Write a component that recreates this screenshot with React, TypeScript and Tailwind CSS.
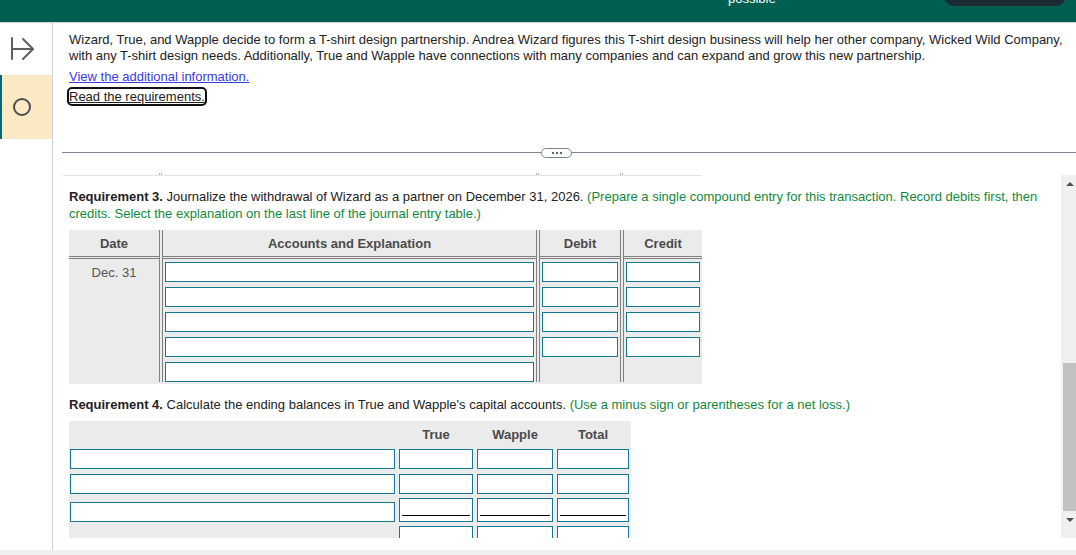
import React from "react";

const Box = ({ className = "" }: { className?: string }) => (
  <div className={`h-[20px] border border-[#137a91] bg-white ${className}`} />
);

const TotalBox = ({ className = "" }: { className?: string }) => (
  <div className={`flex h-[24px] flex-col justify-end border border-[#137a91] bg-white px-[2px] pb-[5px] ${className}`}>
    <div className="h-px bg-black" />
  </div>
);

const JournalTable: React.FC = () => {
  const rows = [0, 1, 2, 3, 4];
  return (
    <div className="mt-[8px] flex w-[633px] bg-[#ebebeb] pb-[2px]">
      {/* date column */}
      <div className="w-[90px]">
        <div className="flex h-[29px] items-center justify-center border-b-[3px] border-double border-[#808080] pt-[2px] font-bold text-[#4a4a4a]">
          Date
        </div>
        <div className="pt-[6px] text-center text-[#555]">Dec. 31</div>
      </div>
      {/* accounts column */}
      <div className="w-[377px] border-l-4 border-double border-[#808080]">
        <div className="flex h-[29px] items-center justify-center border-b-[3px] border-double border-[#808080] pt-[2px] font-bold text-[#4a4a4a]">
          Accounts and Explanation
        </div>
        <div className="flex flex-col gap-[5px] px-[2px] pt-[3px]">
          {rows.map((r) => (
            <Box key={r} />
          ))}
        </div>
      </div>
      {/* debit */}
      <div className="w-[84px] border-l-4 border-double border-[#808080]">
        <div className="flex h-[29px] items-center justify-center border-b-[3px] border-double border-[#808080] pt-[2px] font-bold text-[#4a4a4a]">
          Debit
        </div>
        <div className="flex flex-col gap-[5px] px-[2px] pt-[3px]">
          {rows.slice(0, 4).map((r) => (
            <Box key={r} />
          ))}
        </div>
      </div>
      {/* credit */}
      <div className="w-[82px] border-l-4 border-double border-[#808080]">
        <div className="flex h-[29px] items-center justify-center border-b-[3px] border-double border-[#808080] pt-[2px] font-bold text-[#4a4a4a]">
          Credit
        </div>
        <div className="flex flex-col gap-[5px] px-[2px] pt-[3px]">
          {rows.slice(0, 4).map((r) => (
            <Box key={r} />
          ))}
        </div>
      </div>
    </div>
  );
};

const CapitalTable: React.FC = () => (
  <div className="mt-[8px] w-[562px] bg-[#ebebeb] pl-[1px] pr-[2px]">
    <div className="flex h-[28px] items-center gap-[4px] font-bold text-[#4a4a4a]">
      <div className="w-[325px]" />
      <div className="w-[74px] text-center">True</div>
      <div className="w-[76px] text-center">Wapple</div>
      <div className="w-[72px] text-center">Total</div>
    </div>
    <div className="flex flex-col gap-[4px]">
      <div className="mb-[1px] flex gap-[4px]">
        <Box className="w-[325px]" />
        <Box className="w-[74px]" />
        <Box className="w-[76px]" />
        <Box className="w-[72px]" />
      </div>
      <div className="flex gap-[4px]">
        <Box className="w-[325px]" />
        <Box className="w-[74px]" />
        <Box className="w-[76px]" />
        <Box className="w-[72px]" />
      </div>
      <div className="flex items-end gap-[4px]">
        <Box className="w-[325px]" />
        <TotalBox className="w-[74px]" />
        <TotalBox className="w-[76px]" />
        <TotalBox className="w-[72px]" />
      </div>
      <div className="flex gap-[4px]">
        <div className="w-[325px]" />
        <Box className="w-[74px]" />
        <Box className="w-[76px]" />
        <Box className="w-[72px]" />
      </div>
    </div>
  </div>
);

export default function App() {
  return (
    <div className="flex h-[555px] w-[1076px] flex-col overflow-hidden bg-white font-['Liberation_Sans',Arial,sans-serif] text-[13px] leading-4 text-[#222]">
      {/* top bar */}
      <div className="flex h-[23px] shrink-0 items-start overflow-hidden border-b border-[#d5d5d5] bg-[#005f51]">
        <span className="ml-[728px] mt-[-9px] text-[13px] leading-4 text-white">possible</span>
        <div className="ml-auto mr-[10px] mt-[-14px] h-[20px] w-[122px] rounded-[10px] bg-[#1b2d33]" />
      </div>

      <div className="flex min-h-0 flex-1">
        {/* sidebar */}
        <aside className="flex w-[53px] shrink-0 flex-col border-r border-[#c9d1dc]">
          <div className="h-[52px]">
            <svg width="52" height="52" viewBox="0 0 52 52" fill="none" stroke="#5f5f5f" strokeWidth="2" strokeLinecap="round" strokeLinejoin="round">
              <path d="M12 15v21" />
              <path d="M13 26h20" />
              <path d="M23 16l10 10-10 10" />
            </svg>
          </div>
          <div className="flex h-[64px] items-center justify-center border-l-2 border-[#0b6673] bg-[#fbe9c4] pr-[10px]">
            <svg width="20" height="20" viewBox="0 0 20 20" fill="none">
              <circle cx="10" cy="10" r="8" stroke="#464e54" strokeWidth="2" />
            </svg>
          </div>
        </aside>

        {/* main */}
        <main className="flex min-w-0 flex-1 flex-col">
          <div className="pl-4 pr-[8px] pt-[9px]">
            <p>
              Wizard, True, and Wapple decide to form a T-shirt design partnership. Andrea Wizard figures this T-shirt design business will help her other company, Wicked Wild Company, with any T-shirt design needs. Additionally, True and Wapple have connections with many companies and can expand and grow this new partnership.
            </p>
            <p className="mt-[5px]">
              <span className="text-[#3a3ae0] underline">View the additional information.</span>
            </p>
            <p className="mt-[4px]">
              <span className="rounded-[3px] underline outline-2 outline-[#111]">Read the requirements.</span>
            </p>
          </div>

          {/* divider */}
          <div className="ml-[9px] mt-[42px] flex h-[11px] items-center">
            <div className="h-px w-[479px] bg-[#7b8794]" />
            <div className="flex h-[10px] w-[31px] items-center justify-center gap-[2px] rounded-full border border-[#7b8794] bg-white">
              <span className="h-[2px] w-[2px] bg-[#5a6672]" />
              <span className="h-[2px] w-[2px] bg-[#5a6672]" />
              <span className="h-[2px] w-[2px] bg-[#5a6672]" />
            </div>
            <div className="h-px flex-1 bg-[#7b8794]" />
          </div>

          {/* scrolling area */}
          <div className="ml-[9px] mt-[14px] flex h-[366px]">
            <div className="min-w-0 flex-1 overflow-hidden">
              <div className="flex h-[3px] items-end">
                <span className="ml-[97px] h-[2px] w-[3px] border-x border-[#b5b5b5]" />
                <span className="ml-[374px] h-[2px] w-[3px] border-x border-[#b5b5b5]" />
                <span className="ml-[81px] h-[2px] w-[3px] border-x border-[#b5b5b5]" />
              </div>
              <div className="ml-[1px] h-px w-[639px] bg-[#e3e3e3]" />
              <div className="pl-[7px]">
                <p className="mt-[12px] pr-[10px] leading-[17px]">
                  <span className="font-bold">Requirement 3.</span> Journalize the withdrawal of Wizard as a partner on December 31, 2026.{" "}
                  <span className="text-[#11893c]">
                    (Prepare a single compound entry for this transaction. Record debits first, then credits. Select the explanation on the last line of the journal entry table.)
                  </span>
                </p>
                <JournalTable />
                <p className="mt-[13px]">
                  <span className="font-bold">Requirement 4.</span> Calculate the ending balances in True and Wapple's capital accounts.{" "}
                  <span className="text-[#11893c]">(Use a minus sign or parentheses for a net loss.)</span>
                </p>
                <CapitalTable />
              </div>
            </div>

            {/* scrollbar */}
            <div className="mt-[3px] flex h-[363px] w-[15px] flex-col bg-[#f0f0f0]">
              <div className="flex h-[17px] items-center justify-center pl-[2px]">
                <div className="h-0 w-0 border-x-[4px] border-b-[4px] border-x-transparent border-b-[#505050]" />
              </div>
              <div className="h-[171px]" />
              <div className="ml-[2px] h-[148px] bg-[#c1c1c1]" />
              <div className="flex h-[17px] items-center justify-center pl-[2px]">
                <div className="h-0 w-0 border-x-[4px] border-t-[4px] border-x-transparent border-t-[#505050]" />
              </div>
            </div>
          </div>
        </main>
      </div>

      {/* bottom strip */}
      <div className="h-[5px] shrink-0 bg-[#f0f0f0]" />
    </div>
  );
}
